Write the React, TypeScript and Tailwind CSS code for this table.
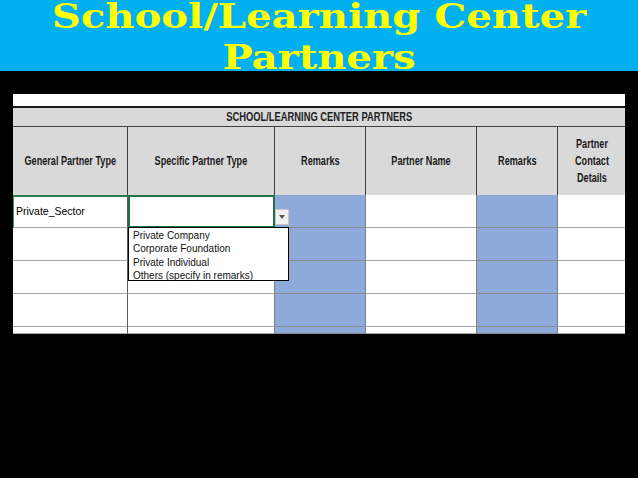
import React from "react";

const COLS = "grid grid-cols-[115px_147px_91px_111px_81px_67px]";

const HEADERS = [
  "General Partner Type",
  "Specific Partner Type",
  "Remarks",
  "Partner Name",
  "Remarks",
  "Partner Contact Details",
];

const OPTIONS = [
  "Private Company",
  "Corporate Foundation",
  "Private Individual",
  "Others (specify in remarks)",
];

const sans = { fontFamily: '"Liberation Sans", Arial, sans-serif' };

function DataRow({ first, height }: { first?: boolean; height: string }) {
  return (
    <div className={`${COLS} ${height}`}>
      <div
        className={`border-r border-b border-r-[#5a5a5a] border-b-[#a6a6a6] bg-white flex items-center pl-[2px] text-[10.5px] text-black ${
          first ? "border-t-2 border-t-[#2e7d4f] border-l border-l-[#3f8f5f]" : ""
        }`}
        style={sans}
      >
        {first ? "Private_Sector" : ""}
      </div>
      <div
        className={`bg-white ${
          first
            ? "border-2 border-[#217346]"
            : "border-r border-b border-r-[#7f7f7f] border-b-[#a6a6a6]"
        }`}
      />
      <div className="bg-[#8eaadb] border-r border-b border-r-[#7f7f7f] border-b-[#8a8a8a]" />
      <div className="bg-white border-r border-b border-r-[#7f7f7f] border-b-[#a6a6a6]" />
      <div className="bg-[#8eaadb] border-r border-b border-r-[#7f7f7f] border-b-[#8a8a8a]" />
      <div className="bg-white border-b border-b-[#a6a6a6]" />
    </div>
  );
}

export default function App() {
  return (
    <div className="w-[638px] h-[478px] bg-black overflow-hidden">
      <div className="h-[71px] bg-[#00b0f0] overflow-hidden">
        <div
          className="-mt-[4px] text-center text-[34px] leading-[41px] font-bold text-[#ffff00] scale-x-[1.18]"
          style={{ fontFamily: '"DejaVu Serif", "Liberation Serif", serif' }}
        >
          School/Learning Center
          <br />
          Partners
        </div>
      </div>

      <div className="relative ml-[13px] mt-[23px] w-[612px]">
        <div className="h-[12px] bg-white" />
        <div className="h-[2px] bg-[#1a1a1a]" />
        <div
          className="h-[18px] bg-[#d9d9d9] flex items-center justify-center text-[12px] font-bold text-[#222]"
          style={sans}
        >
          <span className="inline-block scale-x-[0.78] whitespace-nowrap">
            SCHOOL/LEARNING CENTER PARTNERS
          </span>
        </div>
        <div className={`${COLS} h-[69px] border-t border-[#404040]`}>
          {HEADERS.map((h, i) => (
            <div
              key={i}
              className={`bg-[#d9d9d9] flex items-center justify-center text-center text-[12px] leading-[17px] font-bold text-[#1a1a1a] ${
                i < 5 ? "border-r border-[#404040]" : ""
              }`}
              style={sans}
            >
              <span
                className={`inline-block scale-x-[0.76] ${
                  i === 5 ? "w-[50px]" : "whitespace-nowrap"
                }`}
              >
                {h}
              </span>
            </div>
          ))}
        </div>
        <DataRow first height="h-[33px]" />
        <DataRow height="h-[33px]" />
        <DataRow height="h-[33px]" />
        <DataRow height="h-[33px]" />
        <DataRow height="h-[7px]" />

        {/* dropdown arrow */}
        <div className="absolute left-[262px] top-[115px] w-[14px] h-[16px] bg-[#f0f0f0] border border-[#c8c8c8] flex items-center justify-center">
          <div className="w-0 h-0 border-l-[3px] border-r-[3px] border-t-[4px] border-l-transparent border-r-transparent border-t-[#555]" />
        </div>

        {/* dropdown list */}
        <div
          className="absolute left-[115px] top-[133px] w-[161px] h-[54px] bg-white border border-black pl-[4px] pt-[1px] text-[10px] leading-[13.3px] text-[#111]"
          style={sans}
        >
          {OPTIONS.map((o) => (
            <div key={o}>{o}</div>
          ))}
        </div>
      </div>
    </div>
  );
}
